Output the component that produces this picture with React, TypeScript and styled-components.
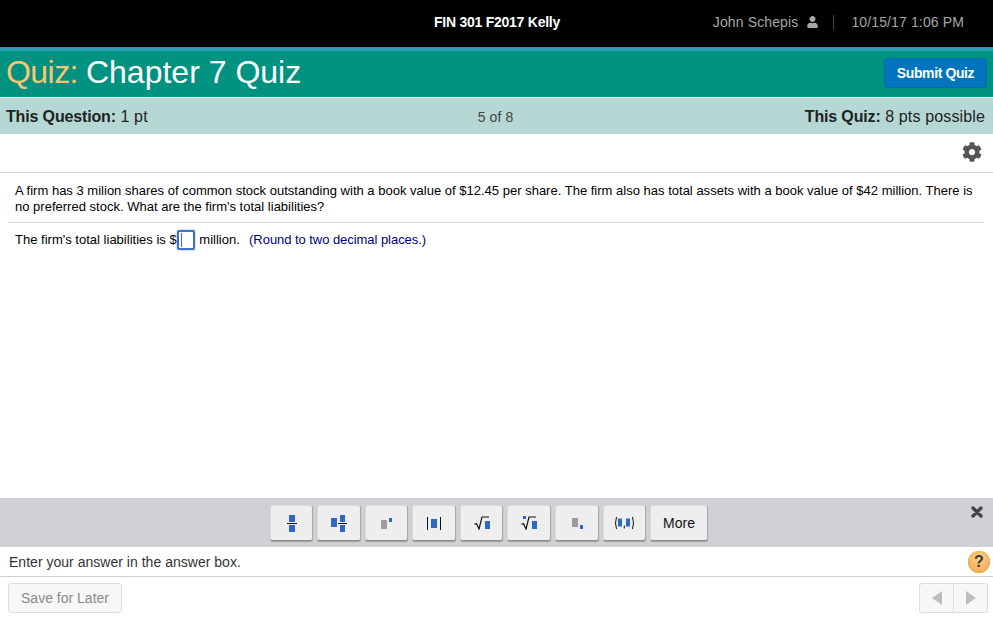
import styled, { createGlobalStyle } from "styled-components";
import { FaCog, FaUser } from "react-icons/fa";

const Global = createGlobalStyle`
    html, body {
        margin: 0;
        padding: 0;
        background: #fff;
    }
    body {
        font-family: "Liberation Sans", Arial, sans-serif;
    }
`;

const Page = styled.div`
    display: flex;
    flex-direction: column;
    height: 623px;
    overflow: hidden;
    background: #fff;
`;

const TopBar = styled.header`
    display: grid;
    grid-template-columns: 1fr auto;
    align-items: center;
    box-sizing: border-box;
    height: 51px;
    flex: none;
    padding-bottom: 3px;
    background: #000;
    border-bottom: 4px solid #2d9cb5;
`;

const CourseName = styled.div`
    color: #fff;
    font-size: 14px;
    font-weight: bold;
    letter-spacing: -0.25px;
    padding-left: 434px;
`;

const UserInfo = styled.div`
    display: flex;
    align-items: center;
    padding-right: 29px;
    color: #a6a6a6;
    font-size: 14px;
    letter-spacing: 0.13px;
`;

const UserIcon = styled(FaUser)`
    width: 11px;
    height: 12px;
    margin-left: 9px;
    color: #a6a6a6;
`;

const Divider = styled.span`
    width: 1px;
    height: 15px;
    margin: 0 17px 0 15px;
    background: #444;
`;

const TitleBar = styled.div`
    display: flex;
    align-items: center;
    justify-content: space-between;
    flex: none;
    box-sizing: border-box;
    height: 47px;
    padding: 0 6px;
    background: #009281;
    border-bottom: 1px solid #fff;
`;

const Title = styled.h1`
    margin: -3px 0 0;
    font-size: 32px;
    font-weight: normal;
    color: #fff;
`;

const TitleLabel = styled.span`
    color: #fdc470;
    letter-spacing: -0.55px;
    margin-right: 8px;
`;

const SubmitButton = styled.button`
    width: 103px;
    height: 30px;
    margin-top: -3px;
    padding: 0;
    font: bold 14px "Liberation Sans", Arial, sans-serif;
    letter-spacing: -0.4px;
    color: #fff;
    background: #0075bd;
    border: 1px solid #006aa8;
    border-radius: 3px;
`;

const InfoBar = styled.div`
    display: grid;
    grid-template-columns: 1fr auto 1fr;
    align-items: center;
    flex: none;
    box-sizing: border-box;
    height: 36px;
    padding: 1px 8px 0 6px;
    background: #b6d8d4;
    color: #222;
    font-size: 16px;
    letter-spacing: 0.14px;
`;

const InfoLabel = styled.b`
    letter-spacing: -0.15px;
`;

const InfoRight = styled.div`
    text-align: right;
`;

const Progress = styled.div`
    font-size: 14px;
    color: #444;
    letter-spacing: 0.1px;
`;

const SettingsRow = styled.div`
    display: flex;
    justify-content: flex-end;
    align-items: flex-start;
    flex: none;
    height: 39px;
    padding: 8px 11px 0 0;
    box-sizing: border-box;
    border-bottom: 1px solid #d3d6de;
`;

const GearIcon = styled(FaCog)`
    width: 20px;
    height: 20px;
    color: #555;
`;

const Question = styled.div`
    flex: 1;
    padding: 10px 9px 0 9px;
    font-size: 13px;
    letter-spacing: 0.008px;
    line-height: 16px;
    color: #000;
`;

const Prompt = styled.p`
    margin: 0;
    padding: 0 6px 7px;
    border-bottom: 1px solid #d3d6de;
`;

const AnswerLine = styled.div`
    display: flex;
    align-items: center;
    height: 33px;
    padding-left: 6px;
    white-space: pre;
`;

const Hint = styled.span`
    margin-left: 2px;
    letter-spacing: -0.05px;
    color: #00007f;
`;

const AnswerBox = styled.span`
    display: flex;
    align-items: center;
    box-sizing: border-box;
    width: 18px;
    height: 20px;
    margin: 0 1px 0 0;
    padding-left: 2px;
    border: 2px solid #3f6fc7;
    border-radius: 2px;
    box-shadow: 0 0 2px #7a9ee0;
`;

const Caret = styled.span`
    width: 1px;
    height: 14px;
    background: #3f6fc7;
`;

const Palette = styled.div`
    position: relative;
    display: flex;
    justify-content: center;
    gap: 4px;
    flex: none;
    box-sizing: border-box;
    height: 49px;
    padding: 7px 15px 0 0;
    background: #cfd1d4;
`;

const PaletteButton = styled.button<{ $w: number }>`
    display: flex;
    align-items: center;
    justify-content: center;
    box-sizing: border-box;
    width: ${(p) => p.$w}px;
    height: 36px;
    padding: 0;
    background: #eeeeee;
    border: 1px solid #dcdcdc;
    border-bottom: 1px solid #8f8f8f;
    border-right: 1px solid #a9a9a9;
    border-radius: 3px;
    box-shadow: 0 1px 1px #9a9a9a;
    font: 14px "Liberation Sans", Arial, sans-serif;
    color: #111;
`;

const CloseIcon = styled.svg`
    position: absolute;
    top: 8px;
    right: 10px;
    width: 12px;
    height: 12px;
`;

const StatusBar = styled.div`
    display: flex;
    align-items: center;
    justify-content: space-between;
    flex: none;
    box-sizing: border-box;
    height: 30px;
    padding: 0 3px 0 9px;
    font-size: 14px;
    letter-spacing: 0.02px;
    color: #333;
    border-bottom: 1px solid #ccd0d8;
`;

const HelpBadge = styled.span`
    display: flex;
    align-items: center;
    justify-content: center;
    width: 22px;
    height: 22px;
    border-radius: 50%;
    font-size: 16px;
    font-weight: bold;
    color: #3a3a3a;
    background: radial-gradient(circle at 50% 35%, #fbd18f, #f0a23c);
    box-shadow: inset 0 0 1px #b87a1e;
`;

const Footer = styled.div`
    display: flex;
    align-items: center;
    justify-content: space-between;
    flex: none;
    box-sizing: border-box;
    height: 46px;
    padding: 0 5px 4px 8px;
`;

const SaveButton = styled.button`
    width: 114px;
    height: 30px;
    padding: 0;
    font: 14px "Liberation Sans", Arial, sans-serif;
    color: #8a8a8a;
    background: #f7f7f7;
    border: 1px solid #dedede;
    border-radius: 3px;
`;

const Pager = styled.div`
    display: flex;
    border: 1px solid #dedede;
    border-radius: 3px;
    background: #f7f7f7;
`;

const PagerButton = styled.span<{ $first?: boolean }>`
    display: flex;
    align-items: center;
    justify-content: center;
    width: 33px;
    height: 28px;
    border-right: ${(p) => (p.$first ? "1px solid #dedede" : "none")};
`;

const BLUE = "#2f68c4";
const GREY = "#9c9c9c";
const INK = "#111";

const Fraction = () => (
    <svg width="10" height="17" viewBox="0 0 10 17">
        <rect x="2" y="0" width="6" height="7" fill={BLUE} />
        <rect x="0" y="8" width="10" height="1" fill={INK} />
        <rect x="2" y="10" width="6" height="7" fill={BLUE} />
    </svg>
);

const MixedFraction = () => (
    <svg width="16" height="17" viewBox="0 0 16 17">
        <rect x="0" y="3" width="6" height="9" fill={BLUE} />
        <rect x="9" y="0" width="5" height="7" fill={BLUE} />
        <rect x="7" y="8" width="9" height="1" fill={INK} />
        <rect x="9" y="10" width="5" height="7" fill={BLUE} />
    </svg>
);

const Exponent = () => (
    <svg width="11" height="11" viewBox="0 0 11 11">
        <rect x="0" y="2" width="6" height="9" fill={GREY} />
        <rect x="8" y="0" width="3" height="4" fill={BLUE} />
    </svg>
);

const AbsoluteValue = () => (
    <svg width="14" height="13" viewBox="0 0 14 13">
        <rect x="0" y="0" width="1" height="13" fill={INK} />
        <rect x="4" y="2" width="6" height="9" fill={BLUE} />
        <rect x="13" y="0" width="1" height="13" fill={INK} />
    </svg>
);

const SquareRoot = () => (
    <svg width="16" height="14" viewBox="0 0 16 14">
        <path d="M0.5 8.5 L2.5 7.5 L5 13 L8 1 H15" fill="none" stroke={INK} strokeWidth="1.2" />
        <rect x="11" y="5" width="5" height="8" fill={BLUE} />
    </svg>
);

const NthRoot = () => (
    <svg width="16" height="14" viewBox="0 0 16 14">
        <rect x="2" y="0" width="3" height="3" fill={BLUE} />
        <path d="M0.5 8.5 L2.5 7.5 L5 13 L8 1 H15" fill="none" stroke={INK} strokeWidth="1.2" />
        <rect x="11" y="5" width="5" height="8" fill={BLUE} />
    </svg>
);

const Subscript = () => (
    <svg width="11" height="11" viewBox="0 0 11 11">
        <rect x="0" y="0" width="6" height="9" fill={GREY} />
        <rect x="8" y="7" width="3" height="4" fill={BLUE} />
    </svg>
);

const OrderedPair = () => (
    <svg width="21" height="14" viewBox="0 0 21 14">
        <path d="M2.5 1 Q0.5 7 2.5 13" fill="none" stroke={INK} />
        <rect x="4" y="2.5" width="4" height="8" fill={BLUE} />
        <rect x="9.8" y="9.5" width="1" height="3" fill={INK} />
        <rect x="12" y="2.5" width="4" height="8" fill={BLUE} />
        <path d="M18.5 1 Q20.5 7 18.5 13" fill="none" stroke={INK} />
    </svg>
);

const Triangle = ({ dir }: { dir: "left" | "right" }) => (
    <svg width="10" height="14" viewBox="0 0 10 14">
        <path d={dir === "left" ? "M10 0 V14 L0 7 Z" : "M0 0 V14 L10 7 Z"} fill="#bdbdbd" />
    </svg>
);

const paletteButtons = [
    { width: 43, icon: <Fraction /> },
    { width: 44, icon: <MixedFraction /> },
    { width: 43, icon: <Exponent /> },
    { width: 44, icon: <AbsoluteValue /> },
    { width: 43, icon: <SquareRoot /> },
    { width: 44, icon: <NthRoot /> },
    { width: 44, icon: <Subscript /> },
    { width: 43, icon: <OrderedPair /> },
    { width: 58, icon: "More" },
];

function App() {
    return (
        <Page>
            <Global />
            <TopBar>
                <CourseName>FIN 301 F2017 Kelly</CourseName>
                <UserInfo>
                    John Schepis
                    <UserIcon />
                    <Divider />
                    10/15/17 1:06 PM
                </UserInfo>
            </TopBar>
            <TitleBar>
                <Title>
                    <TitleLabel>Quiz:</TitleLabel>Chapter 7 Quiz
                </Title>
                <SubmitButton>Submit Quiz</SubmitButton>
            </TitleBar>
            <InfoBar>
                <div>
                    <InfoLabel>This Question:</InfoLabel> 1 pt
                </div>
                <Progress>5 of 8</Progress>
                <InfoRight>
                    <InfoLabel>This Quiz:</InfoLabel> 8 pts possible
                </InfoRight>
            </InfoBar>
            <SettingsRow>
                <GearIcon />
            </SettingsRow>
            <Question>
                <Prompt>
                    A firm has 3 milion shares of common stock outstanding with a book value of $12.45 per share. The firm also has total assets with a book value of $42 million. There is no preferred stock. What are the firm's total liabilities?
                </Prompt>
                <AnswerLine>
                    The firm's total liabilities is $
                    <AnswerBox>
                        <Caret />
                    </AnswerBox>
                    {" million.  "}
                    <Hint>(Round to two decimal places.)</Hint>
                </AnswerLine>
            </Question>
            <Palette>
                {paletteButtons.map((b, i) => (
                    <PaletteButton key={i} $w={b.width}>{b.icon}</PaletteButton>
                ))}
                <CloseIcon viewBox="0 0 12 12">
                    <path d="M2 2 L10 10 M10 2 L2 10" stroke="#444" strokeWidth="3.4" strokeLinecap="round" />
                </CloseIcon>
            </Palette>
            <StatusBar>
                Enter your answer in the answer box.
                <HelpBadge>?</HelpBadge>
            </StatusBar>
            <Footer>
                <SaveButton>Save for Later</SaveButton>
                <Pager>
                    <PagerButton $first>
                        <Triangle dir="left" />
                    </PagerButton>
                    <PagerButton>
                        <Triangle dir="right" />
                    </PagerButton>
                </Pager>
            </Footer>
        </Page>
    );
}

export default App;
